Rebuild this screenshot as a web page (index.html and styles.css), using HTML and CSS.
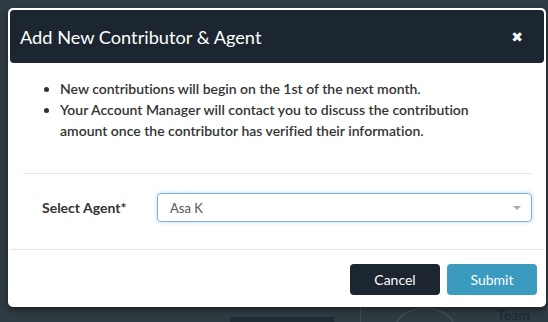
FILE: index.html
```html
<!DOCTYPE html>
<html>
<head>
<meta charset="utf-8">
<link rel="stylesheet" href="styles.css">
</head>
<body>
<div class="modal">
  <div class="modal-header">
    <span class="title">Add New Contributor &amp; Agent</span>
    <span class="close">&#x2716;</span>
  </div>
  <div class="modal-body">
    <ul class="notes">
      <li>New contributions will begin on the 1st of the next month.</li>
      <li>Your Account Manager will contact you to discuss the contribution amount once the contributor has verified their information.</li>
    </ul>
    <hr class="divider">
    <div class="field">
      <label class="label">Select Agent*</label>
      <div class="select">
        <span class="value">Asa K</span>
        <span class="caret"></span>
      </div>
    </div>
  </div>
  <div class="modal-footer">
    <button class="btn btn-cancel">Cancel</button>
    <button class="btn btn-submit">Submit</button>
  </div>
</div>
<div class="backdrop-peek">
  <div class="peek-bar"></div>
  <div class="peek-line"></div>
  <div class="peek-circle"></div>
  <span class="peek-text">Team</span>
</div>
</body>
</html>
```
FILE: styles.css
```css
* { box-sizing: border-box; }
html, body { margin: 0; padding: 0; }
body {
  width: 548px;
  height: 322px;
  overflow: hidden;
  background: #2f3b43;
  font-family: Lato, "Open Sans", sans-serif;
  font-variant-ligatures: none;
  position: relative;
}
.modal {
  position: relative;
  z-index: 2;
  margin: 8px 2px 0 8px;
  width: 538px;
  height: 299px;
  background: #fff;
  border-radius: 5px;
  padding: 2px;
  box-shadow: 0 3px 6px rgba(0,0,0,0.45);
}
.modal-header {
  height: 53px;
  background: #1b2631;
  border-radius: 4px;
  display: flex;
  align-items: center;
  justify-content: space-between;
  padding: 0 21px 0 10px;
}
.title {
  color: #fff;
  font-size: 18.2px;
}
.close {
  color: #fff;
  font-size: 14px;
  font-weight: bold;
  font-family: "DejaVu Sans", sans-serif;
}
.modal-body {
  padding: 15px 12px 0 13px;
}
.notes {
  margin: 0;
  padding: 0 50px 0 37px;
  color: #333;
  font-size: 14px;
  font-weight: 600;
  line-height: 21px;
}
.divider {
  border: 0;
  border-top: 1px solid #e4e7ea;
  margin: 32px 0 0 0;
}
.field {
  display: flex;
  align-items: center;
  margin-top: 19px;
  padding-left: 19px;
}
.label {
  width: 115px;
  font-size: 14px;
  font-weight: bold;
  color: #333;
}
.select {
  flex: 1;
  height: 29px;
  border: 1px solid #7cb4dc;
  border-radius: 4px;
  box-shadow: 0 0 4px rgba(102,175,233,0.45);
  display: flex;
  align-items: center;
  justify-content: space-between;
  padding: 0 10px 0 12px;
}
.value {
  font-size: 13px;
  color: #555;
}
.caret {
  width: 0;
  height: 0;
  border-left: 4px solid transparent;
  border-right: 4px solid transparent;
  border-top: 4px solid #aaa;
}
.modal-footer {
  margin-top: 27px;
  border-top: 1px solid #e4e7ea;
  display: flex;
  justify-content: flex-end;
  gap: 7px;
  padding: 14px 7px 0 0;
}
.btn {
  height: 31px;
  border: 0;
  border-radius: 4px;
  color: #fff;
  font-family: Lato, "Open Sans", sans-serif;
  font-variant-ligatures: none;
  font-size: 14px;
}
.btn-cancel { width: 90px; background: #1b2631; }
.btn-submit { width: 90px; background: #3b9bbf; }
.backdrop-peek {
  position: absolute;
  left: 0;
  top: 300px;
  width: 548px;
  height: 22px;
  overflow: hidden;
  z-index: 1;
}
.peek-bar {
  position: absolute;
  left: 230px;
  top: 17px;
  width: 104px;
  height: 5px;
  background: #1e2a34;
}
.peek-line {
  position: absolute;
  left: 360px;
  top: 0;
  width: 1px;
  height: 22px;
  background: #3f4b53;
}
.peek-circle {
  position: absolute;
  left: 395px;
  top: 8px;
  width: 60px;
  height: 40px;
  border: 1px solid #4a565e;
  border-radius: 50%;
}
.peek-text {
  position: absolute;
  left: 497px;
  top: 7px;
  font-size: 14px;
  line-height: 16px;
  color: #1f2b34;
  font-weight: bold;
}
```
